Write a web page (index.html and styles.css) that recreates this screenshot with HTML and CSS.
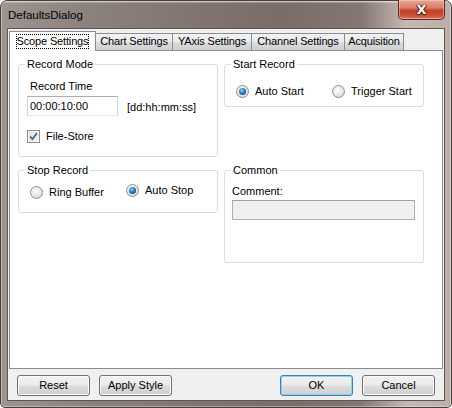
FILE: index.html
```html
<!DOCTYPE html>
<html>
<head>
<meta charset="utf-8">
<link rel="stylesheet" href="styles.css">
</head>
<body>
<div class="window">
  <div class="titlebar">
    <span class="title">DefaultsDialog</span>
    <div class="close"><span class="close-x">X</span></div>
  </div>
  <div class="client">
    <div class="tabstrip">
      <div class="tab selected w-scope"><span class="focus">Scope Settings</span></div>
      <div class="tab w-chart">Chart Settings</div>
      <div class="tab w-yaxis">YAxis Settings</div>
      <div class="tab w-channel">Channel Settings</div>
      <div class="tab w-acq">Acquisition</div>
    </div>
    <div class="panel">
      <div class="grid">
        <div class="group g-record">
          <div class="group-title">Record Mode</div>
          <div class="lbl-time">Record Time</div>
          <div class="row-time">
            <div class="textbox tb-time">00:00:10:00</div>
            <span class="fmt">[dd:hh:mm:ss]</span>
          </div>
          <div class="check-row">
            <span class="checkbox">
              <svg width="9" height="9" viewBox="0 0 9 9"><path d="M1.2 4.6 L3.4 7.2 L7.8 1.3" fill="none" stroke="#3d5a8f" stroke-width="1.6"/></svg>
            </span>
            <span>File-Store</span>
          </div>
        </div>
        <div class="group g-start">
          <div class="group-title">Start Record</div>
          <div class="radio-row r-start">
            <div class="opt opt-auto"><span class="radio on"></span><span>Auto Start</span></div>
            <div class="opt"><span class="radio"></span><span>Trigger Start</span></div>
          </div>
        </div>
        <div class="group g-stop">
          <div class="group-title">Stop Record</div>
          <div class="radio-row r-stop">
            <div class="opt opt-ring"><span class="radio"></span><span>Ring Buffer</span></div>
            <div class="opt opt-autostop"><span class="radio on"></span><span>Auto Stop</span></div>
          </div>
        </div>
        <div class="group g-common">
          <div class="group-title">Common</div>
          <div class="lbl-comment">Comment:</div>
          <div class="textbox tb-comment"></div>
        </div>
      </div>
    </div>
    <div class="footer">
      <div class="btn">Reset</div>
      <div class="btn">Apply Style</div>
      <div class="spacer"></div>
      <div class="btn default">OK</div>
      <div class="btn">Cancel</div>
    </div>
  </div>
</div>
</body>
</html>
```

FILE: styles.css
```css
html, body {
  margin: 0;
  padding: 0;
  background: #ffffff;
}
body {
  font-family: "Liberation Sans", Arial, sans-serif;
  font-size: 11px;
  color: #000;
}
.window {
  box-sizing: border-box;
  width: 452px;
  height: 408px;
  border: 1px solid #4a3f3c;
  border-radius: 7px 7px 5px 5px;
  padding: 0 6px 6px 6px;
  display: flex;
  flex-direction: column;
  background:
    linear-gradient(to bottom, rgba(255,255,255,0.55) 0, rgba(255,255,255,0.55) 1px, rgba(255,255,255,0) 2px),
    linear-gradient(to right, #9d9490 0%, #8b817c 20%, #817470 45%, #7a6c67 62%, #847672 80%, #c6b8b3 90%, #bcaea9 100%);
  box-shadow: inset 1px 0 0 rgba(255,255,255,0.35), inset -1px 0 0 rgba(255,255,255,0.35), inset 0 -1px 0 rgba(255,255,255,0.35);
}
.titlebar {
  height: 27px;
  display: flex;
  justify-content: space-between;
  align-items: flex-start;
}
.title {
  margin-left: 1px;
  margin-top: 7px;
  font-size: 11.5px;
  line-height: 14px;
  color: #000;
}
.close {
  box-sizing: border-box;
  width: 47px;
  height: 20px;
  margin-top: -1px;
  border: 1px solid #5a2a22;
  border-top: none;
  border-radius: 0 0 5px 5px;
  background: linear-gradient(to bottom, #e9a795 0%, #dc7f6a 40%, #c2412a 55%, #c84c33 80%, #dc7a5e 100%);
  box-shadow: inset 0 0 0 1px rgba(255,220,210,0.45);
  display: flex;
  align-items: center;
  justify-content: center;
}
.close-x {
  font-family: "DejaVu Sans", sans-serif;
  font-weight: bold;
  font-size: 13px;
  line-height: 14px;
  color: #fff;
  text-shadow: 0 0 1px #5a1a10, 1px 0 1px #5a1a10, -1px 0 1px #5a1a10, 0 1px 1px #5a1a10;
}
.client {
  flex: 1;
  border: 1px solid #5e5450;
  background: #f0f0f0;
  padding: 2px 1px 0 1px;
  display: flex;
  flex-direction: column;
}
.tabstrip {
  height: 19px;
  display: flex;
  align-items: flex-end;
  position: relative;
  z-index: 1;
}
.tab {
  box-sizing: border-box;
  height: 17px;
  border: 1px solid #898c95;
  border-bottom: none;
  border-right: none;
  background: linear-gradient(to bottom, #f2f2f2 0%, #ebebeb 50%, #dddddd 51%, #cfcfcf 100%);
  text-align: center;
  line-height: 15px;
  white-space: nowrap;
  letter-spacing: -0.15px;
}
.tab + .tab { border-left: 1px solid #898c95; }
.w-acq { border-right: 1px solid #898c95; }
.tab.selected {
  height: 20px;
  margin-bottom: -1px;
  background: #ffffff;
  border-right: 1px solid #898c95;
  padding-top: 2px;
  line-height: 14px;
}
.w-scope { width: 87px; }
.w-chart { width: 76px; border-left: none !important; }
.w-yaxis { width: 79px; }
.w-channel { width: 93px; }
.w-acq { width: 60px; }
.focus {
  display: inline-block;
  border: 1px dotted #000;
  padding: 0;
  line-height: 13px;
}
.panel {
  height: 319px;
  box-sizing: border-box;
  border: 1px solid #898c95;
  background: #ffffff;
  padding: 13px 0 0 8px;
}
.grid {
  display: grid;
  grid-template-columns: 200px 200px;
  column-gap: 6px;
  row-gap: 13px;
  align-items: start;
}
.group {
  box-sizing: border-box;
  border: 1px solid #d5dfe5;
  border-radius: 3px;
  display: flex;
  flex-direction: column;
  align-items: flex-start;
}
.group-title {
  margin-top: -7px;
  margin-left: 6px;
  padding: 0 2px;
  background: #fff;
  line-height: 13px;
}
.g-record { height: 93px; padding-left: 8px; }
.g-start { height: 43px; padding-left: 11px; }
.g-stop { height: 43px; padding-left: 11px; }
.g-common { height: 93px; padding-left: 7px; }
.g-record .group-title { margin-left: -2px; }
.g-start .group-title, .g-stop .group-title { margin-left: -5px; }
.g-common .group-title { margin-left: -1px; }
.lbl-time {
  margin-top: 9px;
  margin-left: 3px;
  line-height: 13px;
}
.row-time {
  margin-top: 3px;
  display: flex;
  align-items: center;
}
.textbox {
  box-sizing: border-box;
  height: 20px;
  border: 1px solid #abadb3;
  border-left-color: #d2d4d8;
  border-right-color: #d2d4d8;
  border-bottom-color: #e3e6ea;
  background: #fff;
  line-height: 18px;
  padding-left: 2px;
}
.tb-time { width: 91px; }
.fmt { margin-left: 9px; margin-top: 1px; }
.check-row {
  margin-top: 14px;
  display: flex;
  align-items: center;
  line-height: 13px;
}
.checkbox {
  box-sizing: border-box;
  width: 13px;
  height: 13px;
  border: 1px solid #8e8f8f;
  background: linear-gradient(135deg, #dcdcdc 0%, #f6f6f6 100%);
  box-shadow: inset 0 0 0 1px #f4f4f4;
  display: flex;
  align-items: center;
  justify-content: center;
  margin-right: 6px;
}
.checkbox svg { display: block; }
.radio-row {
  display: flex;
  align-items: flex-start;
  line-height: 13px;
}
.r-start { margin-top: 14px; }
.r-stop { margin-top: 7px; }
.opt {
  display: flex;
  align-items: center;
}
.opt-auto { width: 96px; }
.opt-ring { width: 96px; margin-top: 2px; }
.radio {
  box-sizing: border-box;
  width: 13px;
  height: 13px;
  border-radius: 50%;
  border: 1px solid #8e8f8f;
  background: radial-gradient(circle at 40% 35%, #fbfbfb 0%, #e6e6e6 55%, #cfcfcf 100%);
  margin-right: 6px;
  position: relative;
}
.radio.on::after {
  content: "";
  position: absolute;
  left: 2px;
  top: 2px;
  width: 7px;
  height: 7px;
  border-radius: 50%;
  background: radial-gradient(circle at 40% 35%, #8fd0f5 0%, #2a7bc0 45%, #0d3f7a 100%);
}
.lbl-comment {
  margin-top: 8px;
  line-height: 13px;
}
.tb-comment {
  margin-top: 2px;
  width: 183px;
  background: #f0f0f0;
  border-color: #adadad;
  border-top-color: #a0a0a0;
}
.footer {
  flex: 1;
  display: flex;
  align-items: flex-start;
  padding: 6px 8px 0 8px;
  column-gap: 9px;
}
.spacer { flex: 1; }
.btn {
  box-sizing: border-box;
  width: 73px;
  height: 21px;
  border: 1px solid #707070;
  border-radius: 3px;
  background: linear-gradient(to bottom, #f2f2f2 0%, #ebebeb 48%, #dddddd 52%, #cfcfcf 100%);
  box-shadow: inset 0 0 0 1px #fbfbfb;
  text-align: center;
  line-height: 19px;
}
.btn.default {
  border-color: #3c7fb1;
  box-shadow: inset 0 0 0 1px #8fd3f4;
}
```
